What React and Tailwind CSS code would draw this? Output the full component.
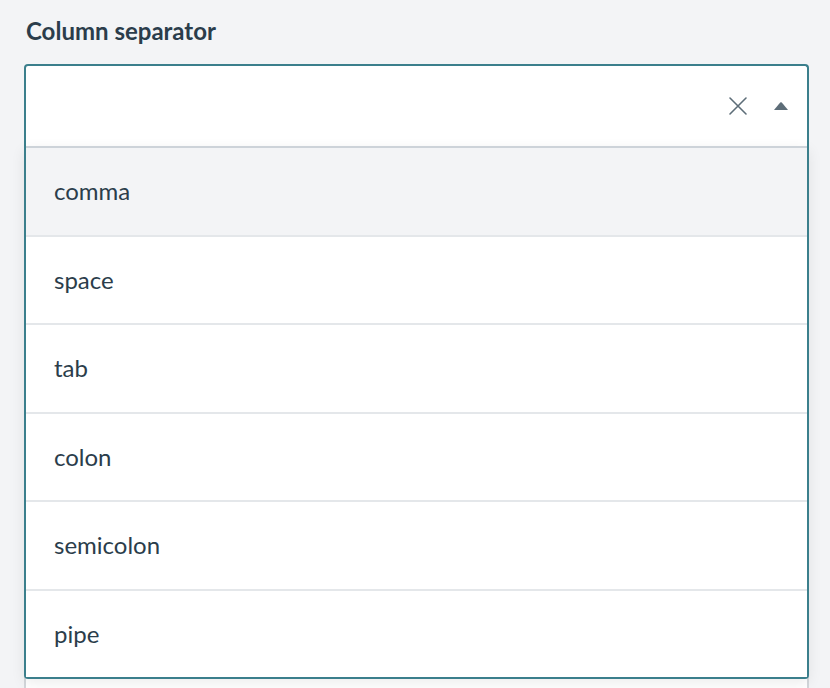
import React from "react";

const options = ["comma", "space", "tab", "colon", "semicolon", "pipe"];

export default function App() {
  return (
    <div
      className="h-[688px] w-[830px] overflow-hidden bg-[#f3f4f6] pl-[24px] pr-[21px] pt-[14px]"
      style={{ fontFamily: "Lato, 'Open Sans', sans-serif" }}
    >
      <label className="block pl-[2px] text-[24px] font-bold leading-[34px] text-[#2b3d4b]">
        Column separator
      </label>
      <div className="relative mt-[16px]">
        <div className="flex h-[82px] items-center justify-end rounded-t-[4px] border-2 border-b-0 border-[#3b7f8c] bg-white pr-[19px]">
          <button className="mr-[26px] flex h-[20px] w-[20px] items-center justify-center text-[#5d6d78]">
            <svg width="20" height="20" viewBox="0 0 20 20" fill="none" stroke="currentColor" strokeWidth="1.6" strokeLinecap="round">
              <path d="M2 2 L18 18 M18 2 L2 18" />
            </svg>
          </button>
          <svg width="14" height="8" viewBox="0 0 14 8" className="text-[#5d6d78]">
            <path d="M6.2 0.6 Q7 -0.2 7.8 0.6 L14 8 L0 8 Z" fill="currentColor" />
          </svg>
        </div>
        <div className="absolute left-0 right-0 top-full z-10 rounded-b-[4px] border-2 border-t-0 border-[#3b7f8c] bg-white shadow-[0_4px_14px_rgba(0,0,0,0.08)]">
          {options.map((o, i) => (
            <div
              key={o}
              className={`flex h-[88.5px] items-center border-t-2 pl-[28px] text-[24px] text-[#2b3d4b] ${
                i === 0 ? "border-[#cdd3d9] bg-[#f3f4f6]" : "border-[#e4e7ea] bg-white"
              }`}
            >
              {o}
            </div>
          ))}
        </div>
      </div>
      <div className="mt-[40px] h-[600px] rounded-[4px] border-2 border-[#d3d7db] bg-white" />
    </div>
  );
}
